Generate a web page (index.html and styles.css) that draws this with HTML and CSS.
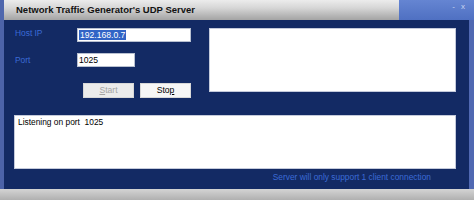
FILE: index.html
```html
<!DOCTYPE html>
<html>
<head>
<meta charset="utf-8">
<link rel="stylesheet" href="styles.css">
</head>
<body>
<div class="window">
  <div class="titlebar">
    <div class="title">Network Traffic Generator's UDP Server</div>
    <div class="caption"><span class="cap-min">-</span><span class="cap-close">x</span></div>
  </div>
  <div class="frame">
    <div class="edge-left"></div>
    <div class="client">
      <div class="top">
        <div class="form">
          <div class="row row-ip">
            <div class="label label-ip">Host IP</div>
            <div class="textbox tb-ip"><span class="sel">192.168.0.7</span></div>
          </div>
          <div class="row row-port">
            <div class="label">Port</div>
            <div class="textbox tb-port">1025</div>
          </div>
          <div class="buttons">
            <div class="btn btn-disabled"><u>S</u>tart</div>
            <div class="btn">Sto<u>p</u></div>
          </div>
        </div>
        <div class="panel"></div>
      </div>
      <div class="log">Listening on port  1025</div>
      <div class="status">Server will only support 1 client connection</div>
    </div>
    <div class="edge-right"></div>
  </div>
  <div class="statusbar"></div>
</div>
</body>
</html>
```

FILE: styles.css
```css
html, body {
  margin: 0;
  padding: 0;
  background: #ffffff;
}
.window {
  width: 474px;
  height: 200px;
  display: flex;
  flex-direction: column;
  background: #4f67ad;
  font-family: "Liberation Sans", Arial, sans-serif;
  overflow: hidden;
}
.titlebar {
  height: 20px;
  display: flex;
  flex: none;
}
.title {
  margin-left: 4px;
  width: 395px;
  height: 20px;
  box-sizing: border-box;
  padding-left: 12px;
  line-height: 20px;
  font-size: 9.5px;
  font-weight: bold;
  color: #111;
  background: linear-gradient(#ececec 0%, #d6d6d6 40%, #b4b4b4 80%, #a4a4a4 100%);
}
.caption {
  flex: 1;
  background: linear-gradient(#6585d2, #4f70c2);
  display: flex;
  justify-content: flex-end;
  gap: 6px;
  padding-right: 9px;
  font-size: 8px;
  line-height: 14px;
  color: #c8d4f0;
}
.frame {
  height: 169px;
  display: flex;
  flex: none;
}
.edge-left {
  width: 4px;
  background: #4c63a9;
}
.edge-right {
  width: 5px;
  background: #5068b2;
}
.client {
  width: 465px;
  background: #132a64;
  box-sizing: border-box;
  padding: 8px 0 0 10px;
  font-size: 8.4px;
}
.top {
  display: flex;
}
.form {
  width: 195px;
}
.row {
  display: flex;
  height: 14px;
  align-items: center;
}
.row-ip {
  align-items: flex-start;
}
.row-port {
  margin-top: 11px;
}
.label {
  width: 63px;
  box-sizing: border-box;
  padding-left: 1px;
  color: #3b6bd6;
  line-height: 14px;
}
.label-ip {
  line-height: 11px;
}
.textbox {
  height: 14px;
  box-sizing: border-box;
  background: #ffffff;
  border: 1px solid #b8c0d0;
  color: #000;
  line-height: 12px;
  padding-left: 1px;
  font-size: 8.6px;
}
.tb-ip {
  width: 114px;
}
.tb-port {
  width: 58px;
}
.sel {
  background: #3164c6;
  color: #ffffff;
  padding: 0 1px;
}
.buttons {
  display: flex;
  gap: 6px;
  margin-top: 16px;
  margin-left: 69px;
}
.btn {
  width: 51px;
  height: 15px;
  box-sizing: border-box;
  background: #f6f6f6;
  border: 1px solid #d8d8d8;
  color: #000;
  text-align: center;
  line-height: 13px;
  font-size: 8.6px;
}
.btn-disabled {
  background: #ebebeb;
  color: #a4a4a4;
}
.panel {
  width: 247px;
  height: 64px;
  box-sizing: border-box;
  background: #ffffff;
  border: 1px solid #c4cadb;
}
.log {
  margin-top: 17px;
  width: 442px;
  height: 54px;
  box-sizing: border-box;
  background: #ffffff;
  border: 1px solid #c4cadb;
  padding: 1px 3px;
  line-height: 11px;
  white-space: pre;
  color: #000;
}
.status {
  margin-top: 2px;
  padding-right: 38px;
  text-align: right;
  color: #3b6bd6;
  line-height: 12px;
}
.statusbar {
  flex: 1;
  background: linear-gradient(#d4d4d4, #b0b0b0);
}
```
